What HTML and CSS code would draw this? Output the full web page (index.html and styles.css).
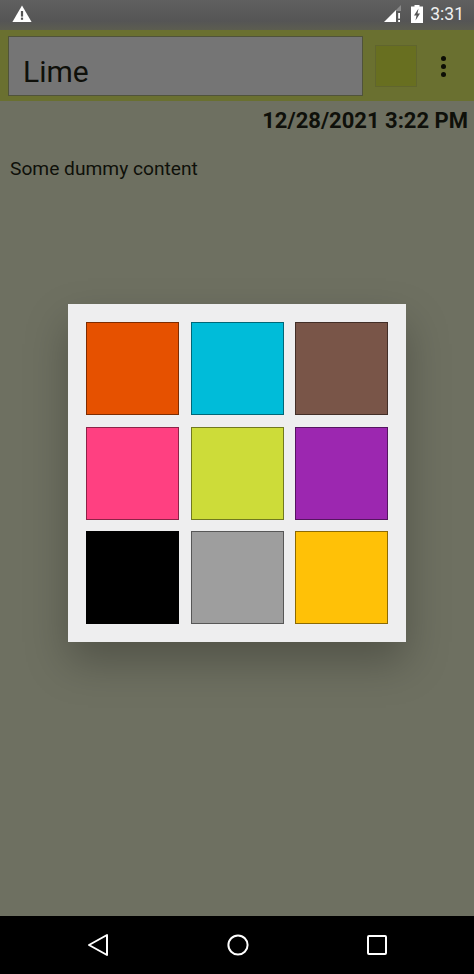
FILE: index.html
```html
<!DOCTYPE html>
<html lang="en">
<head>
    <meta charset="UTF-8">
    <meta name="viewport" content="width=device-width, initial-scale=1.0">
    <title>Lime</title>
    <link rel="stylesheet" href="styles.css">
</head>
<body>
    <div class="status-bar">
        <svg class="alert-icon" width="20" height="18" viewBox="0 0 20 18">
            <path d="M10 0.5 L19.6 17 H0.4 Z" fill="#fff"/>
            <rect x="8.9" y="6" width="2.2" height="5.6" fill="#555"/>
            <rect x="8.9" y="12.6" width="2.2" height="2.2" fill="#555"/>
        </svg>
        <div class="status-right">
            <svg width="18" height="18" viewBox="0 0 18 18">
                <path d="M0 17 L12 5 V17 Z" fill="#fff"/>
                <path d="M12 5 L17 0 V6 H12 Z" fill="#8a8a8a"/>
                <rect x="14.2" y="8" width="1.8" height="5.6" fill="#fff"/>
                <rect x="14.2" y="15" width="1.8" height="2" fill="#fff"/>
            </svg>
            <svg class="battery-icon" width="12" height="18" viewBox="0 0 12 18">
                <path d="M3.5 1.5 V0 H8.5 V1.5 H12 V18 H0 V1.5 Z" fill="#fff"/>
                <path d="M7.5 3.5 L3 10.5 H5.5 L4.5 15.5 L9 8.5 H6.5 Z" fill="#555"/>
            </svg>
            <span class="clock">3:31</span>
        </div>
    </div>

    <header class="toolbar">
        <div class="title-field">Lime</div>
        <div class="color-button"></div>
        <div class="menu-dots">
            <span></span>
            <span></span>
            <span></span>
        </div>
    </header>

    <main class="content">
        <div class="timestamp">12/28/2021 3:22 PM</div>
        <p class="dummy">Some dummy content</p>
    </main>

    <nav class="nav-bar">
        <svg width="22" height="24" viewBox="0 0 22 24">
            <path d="M20 2 V22 L2 12 Z" fill="none" stroke="#fff" stroke-width="2" stroke-linejoin="round"/>
        </svg>
        <svg width="22" height="22" viewBox="0 0 22 22">
            <circle cx="11" cy="11" r="9.6" fill="none" stroke="#fff" stroke-width="2"/>
        </svg>
        <svg width="20" height="20" viewBox="0 0 20 20">
            <rect x="1" y="1" width="18" height="18" rx="1" fill="none" stroke="#fff" stroke-width="2"/>
        </svg>
    </nav>

    <div class="color-dialog">
        <div class="swatch orange"></div>
        <div class="swatch cyan"></div>
        <div class="swatch brown"></div>
        <div class="swatch pink"></div>
        <div class="swatch lime"></div>
        <div class="swatch purple"></div>
        <div class="swatch black"></div>
        <div class="swatch grey"></div>
        <div class="swatch amber"></div>
    </div>
</body>
</html>
```

FILE: styles.css
```css
* {
    margin: 0;
    padding: 0;
    box-sizing: border-box;
    font-family: Roboto, sans-serif;
}

body {
    position: relative;
    display: flex;
    flex-direction: column;
    height: 974px;
    overflow: hidden;
    background-color: #6e7061;
    color: #0f100a;
}

.status-bar {
    display: flex;
    justify-content: space-between;
    align-items: center;
    height: 30px;
    padding: 0 10px 2px 12px;
    background: linear-gradient(#606060, #555 70%, #5c5d50);
    color: #fff;
}

.status-right {
    display: flex;
    align-items: center;
}

.battery-icon {
    margin: 0 7px 0 9px;
}

.clock {
    font-size: 17.5px;
    color: #f0f0f0;
}

.toolbar {
    display: flex;
    align-items: center;
    height: 71px;
    padding: 1px 0 0 8px;
    background-color: #6a7030;
}

.title-field {
    width: 355px;
    height: 60px;
    padding: 17px 0 0 14px;
    background-color: #757575;
    border: 1px solid #50533a;
    font-size: 30px;
    line-height: 36px;
}

.color-button {
    width: 42px;
    height: 42px;
    margin-left: 12px;
    background-color: #686f20;
    border: 1px solid #60652e;
}

.menu-dots {
    display: flex;
    flex-direction: column;
    gap: 3px;
    margin-left: 24px;
}

.menu-dots span {
    width: 5px;
    height: 5px;
    border-radius: 50%;
    background-color: #0c0d05;
}

.content {
    flex-grow: 1;
}

.timestamp {
    padding: 7px 6px 0 0;
    text-align: right;
    font-size: 22px;
    line-height: 26px;
    font-weight: bold;
}

.dummy {
    margin-top: 23px;
    padding-left: 10px;
    font-size: 19.2px;
    line-height: 23px;
}

.nav-bar {
    display: flex;
    justify-content: space-between;
    align-items: center;
    height: 58px;
    padding: 0 87px;
    background-color: #000;
}

.color-dialog {
    position: absolute;
    top: 304px;
    left: 68px;
    display: grid;
    grid-template-columns: repeat(3, 93px);
    grid-auto-rows: 93px;
    gap: 11.5px;
    width: 338px;
    height: 338px;
    padding: 18px;
    background-color: #eeeeef;
    box-shadow: 0 20px 40px rgba(0, 0, 0, 0.26);
}

.swatch {
    border: 1px solid rgba(0, 0, 0, 0.45);
}

.orange { background-color: #e65100; }
.cyan { background-color: #00bcd9; }
.brown { background-color: #795548; }
.pink { background-color: #ff4081; }
.lime { background-color: #cddc39; }
.purple { background-color: #9c27b0; }
.black { background-color: #000; }
.grey { background-color: #9e9e9e; }
.amber { background-color: #ffc107; }
```
